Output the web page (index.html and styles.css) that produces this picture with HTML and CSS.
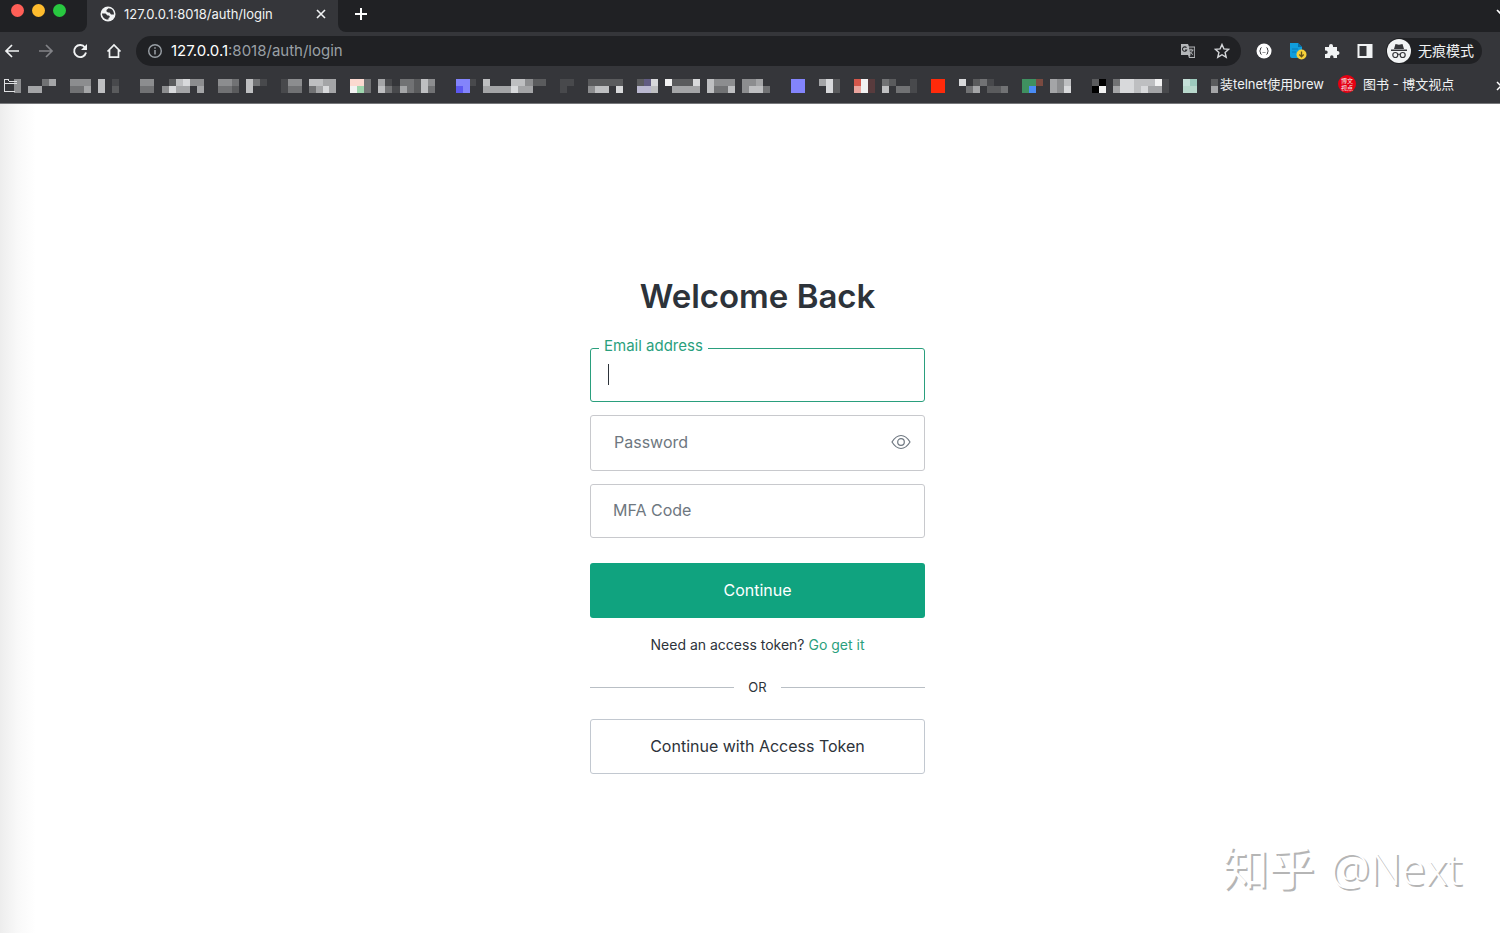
FILE: index.html
```html
<!DOCTYPE html>
<html lang="zh-CN">
<head>
<meta charset="utf-8">
<title>127.0.0.1:8018/auth/login</title>
<link rel="stylesheet" href="styles.css">
</head>
<body>
<header class="browser">
  <div class="tabstrip">
    <div class="lights"><span class="light red"></span><span class="light yellow"></span><span class="light green"></span></div>
    <div class="tab">
      <svg class="globe" width="16" height="16" viewBox="0 0 16 16"><circle cx="8" cy="8" r="7.5" fill="#f1f3f4"/><path d="M2 7.500h3.500L7.500 9.500H9l1 1.500-1.500 1v1.500C5 14 2 11 2 7.500zM8.500 2.200L6.500 4v1.500L8 6.500h1.500L11 8.500h3C14 5 12 2.300 8.500 2.200z" fill="#35363a"/></svg>
      <span class="tab-title">127.0.0.1:8018/auth/login</span>
      <button class="icon-btn" aria-label="Close tab"><svg width="10" height="10" viewBox="0 0 10 10"><path d="M1 1l8 8M9 1L1 9" stroke="#f1f3f4" stroke-width="1.6"/></svg></button>
    </div>
    <button class="icon-btn new-tab" aria-label="New tab"><svg width="14" height="14" viewBox="0 0 14 14"><path d="M7 1v12M1 7h12" stroke="#fff" stroke-width="2"/></svg></button>
    <button class="icon-btn edge" aria-label="Search tabs"><svg width="10" height="8" viewBox="0 0 10 8"><path d="M1 2l4 4 4-4" fill="none" stroke="#fff" stroke-width="1.6"/></svg></button>
  </div>
  <div class="toolbar">
    <nav class="nav">
      <button class="icon-btn" aria-label="Back"><svg width="16" height="16" viewBox="0 0 16 16"><path d="M15 8H2M8 2L2 8l6 6" fill="none" stroke="#f1f3f4" stroke-width="1.7"/></svg></button>
      <button class="icon-btn" aria-label="Forward"><svg width="16" height="16" viewBox="0 0 16 16"><path d="M1 8h13M8 2l6 6-6 6" fill="none" stroke="#828387" stroke-width="1.7"/></svg></button>
      <button class="icon-btn" aria-label="Reload"><svg width="16" height="16" viewBox="0 0 16 16"><path d="M13 4.500A6 6 0 1 0 14 9.500" fill="none" stroke="#f1f3f4" stroke-width="1.9"/><path d="M15 1v6H9z" fill="#f1f3f4"/></svg></button>
      <button class="icon-btn" aria-label="Home"><svg width="16" height="16" viewBox="0 0 16 16"><path d="M1.500 8.500L8 2l6.500 6.500M3.500 7v7.200h9V7" fill="none" stroke="#f1f3f4" stroke-width="1.700"/></svg></button>
    </nav>
    <div class="omnibox">
      <svg width="16" height="16" viewBox="0 0 16 16"><circle cx="8" cy="8" r="6.300" fill="none" stroke="#9aa0a6" stroke-width="1.400"/><path d="M8 7v4.500M8 4.300v1.500" stroke="#9aa0a6" stroke-width="1.500"/></svg>
      <span class="url"><span class="host">127.0.0.1</span>:8018/auth/login</span>
      <button class="icon-btn" aria-label="Translate"><svg width="16" height="16" viewBox="0 0 16 16"><path d="M1 1h7l1 2.500h6v11.500H9L8 12H1z" fill="#b4b6b9"/><path d="M9 4.500h5.200V14H9.500l1-2z" fill="#292a2d"/><path d="M6.500 4.800a2.200 2.200 0 1 0 .2 2.200H5" fill="none" stroke="#292a2d" stroke-width="1.100"/><path d="M8.500 7h5M11 5.700V7M12.500 7c-.5 2-1.500 3-3 4M10 8.500c.7 1.500 1.500 2.300 3 3" fill="none" stroke="#b4b6b9"/></svg></button>
      <button class="icon-btn" aria-label="Bookmark"><svg width="16" height="16" viewBox="0 0 16 16"><path d="M8 1.500l1.900 4.400 4.800.4-3.600 3.200 1.100 4.700L8 11.700l-4.200 2.500 1.100-4.700-3.600-3.200 4.800-.4z" fill="none" stroke="#d5d7da" stroke-width="1.400"/></svg></button>
    </div>
    <div class="extensions">
      <button class="icon-btn" aria-label="JSON viewer"><svg width="16" height="16" viewBox="0 0 16 16"><circle cx="8" cy="8" r="7.500" fill="#fff"/><path d="M5.500 4.500c-1.500 0-.5 3-2 3.500 1.500.5.500 3.500 2 3.500M10.500 4.500c1.500 0 .5 3 2 3.500-1.500.5-.5 3.500-2 3.500M6.700 9.500h.8M8.500 9.500h.8" fill="none" stroke="#35363a"/></svg></button>
      <button class="icon-btn" aria-label="Downloader"><svg width="18" height="18" viewBox="0 0 18 18"><path d="M1 1h8l4 4v11H3a2 2 0 0 1-2-2z" fill="#109ddc"/><path d="M9 1l4 4H9z" fill="#086da5"/><path d="M3 7h6M3 10h4" stroke="#087bb8"/><circle cx="12.500" cy="12.500" r="5" fill="#f6d13a"/><path d="M12.500 9.500v5M10.300 12.500l2.200 2.300 2.200-2.300" fill="none" stroke="#665318" stroke-width="1.300"/></svg></button>
      <button class="icon-btn" aria-label="Extensions"><svg width="16" height="16" viewBox="0 0 16 16"><path d="M1 4h4V3a2 2 0 0 1 4 0v1h4v4h.5a2 2 0 0 1 0 4H13v3H9.500v-1a1.700 1.700 0 0 0-3.400 0v1H1v-4h1a1.700 1.700 0 0 0 0-3.400H1z" fill="#f1f3f4"/></svg></button>
      <button class="icon-btn" aria-label="Side panel"><svg width="16" height="16" viewBox="0 0 16 16"><path fill-rule="evenodd" d="M.500 1h15v14H.500zM2.500 3v10h7V3z" fill="#f1f3f4"/></svg></button>
    </div>
    <button class="profile"><svg width="24" height="24" viewBox="0 0 24 24"><circle cx="12" cy="12" r="12" fill="#f1f3f4"/><path d="M8.500 5l3.500.7 3.500-.7 1.500 5H7zM4 10.500h16V12H4z" fill="#35363a"/><circle cx="8.300" cy="16" r="2.500" fill="none" stroke="#35363a" stroke-width="1.200"/><circle cx="15.700" cy="16" r="2.500" fill="none" stroke="#35363a" stroke-width="1.200"/><path d="M10.800 15.500q1.200-.8 2.400 0" fill="none" stroke="#35363a"/></svg>无痕模式</button>
  </div>
  <div class="bookmarks">
    <svg class="mosaic" width="1225" height="16" viewBox="0 0 1225 16" shape-rendering="crispEdges">
      <g fill="none" stroke-width="7">
        <path stroke="#48494c" d="M112 4.500h7M260 4.500h7M281 4.500h7M281 11.500h7M385 4.500h7M392 11.500h15M560 4.500h14M560 11.500h7M987 4.500h7M910 4.500h7M910 11.500h7M1162 4.500h7M1162 11.500h7M470 4.500h6"/>
        <path stroke="#5a5b5d" d="M112 11.500h7M169 4.500h7M232 11.500h7M414 4.500h7M414 11.500h7M533 4.500h13M588 4.500h35M637 4.500h7M672 4.500h21M833 4.500h7M833 11.500h7M889 4.500h7M973 4.500h7M987 11.500h14M1092 4.500h7M1211 4.500h7"/>
        <path stroke="#717274" d="M42 4.500h7M70 11.500h14M140 11.500h14M218 11.500h14M232 4.500h7M253 4.500h7M288 11.500h14M309 11.500h7M364 4.500h7M364 11.500h7M385 11.500h7M400 4.500h14M407 11.500h7M428 11.500h7M714 11.500h14M763 11.500h7M882 4.500h7M896 11.500h14M966 11.500h7M980 4.500h7M1001 11.500h7M1113 4.500h7"/>
        <path stroke="#8c8d8f" d="M14 4.500h7M14 11.500h7M70 4.500h21M140 4.500h14M162 11.500h7M190 4.500h14M218 4.500h14M288 4.500h14M428 4.500h7M525 4.500h8M588 11.500h7M714 4.500h21M742 4.500h14M742 11.500h7M1057 4.500h7M1057 11.500h7"/>
        <path stroke="#a4a5a7" d="M28 11.500h14M49 4.500h7M84 11.500h7M176 11.500h14M197 11.500h7M316 11.500h7M323 4.500h13M329 11.500h7M378 4.500h7M400 11.500h7M483 11.500h28M518 11.500h15M672 11.500h28M756 4.500h7M819 4.500h7M973 11.500h7M1050 4.500h7M1050 11.500h7M1113 11.500h7M1148 11.500h14M1211 11.500h7"/>
        <path stroke="#bebfc1" d="M98 4.500h7M98 11.500h7M176 4.500h7M246 4.500h7M246 11.500h7M309 4.500h14M378 11.500h7M421 4.500h7M421 11.500h7M483 4.500h7M511 4.500h14M595 11.500h14M651 11.500h7M707 4.500h7M707 11.500h7M728 11.500h7M749 11.500h14M882 11.500h7M1064 4.500h7M1134 4.500h21M1134 11.500h7"/>
        <path stroke="#d8d9db" d="M169 11.500h7M183 4.500h7M323 11.500h6M511 11.500h7M616 11.500h7M651 4.500h7M693 4.500h7M826 4.500h7M826 11.500h7M959 4.500h7M1064 11.500h7M1120 4.500h14M1120 11.500h14M1141 11.500h7"/>
        <path stroke="#f2f2f2" d="M350 11.500h7M665 4.500h7M861 4.500h7M861 11.500h7M1099 11.500h7M1155 4.500h7"/>
        <path stroke="#fbd9d0" d="M350 4.500h14"/>
        <path stroke="#9fd6ae" d="M357 11.500h7"/>
        <path stroke="#8384fb" d="M456 4.500h14M463 11.500h7M791 4.500h14M791 11.500h14"/>
        <path stroke="#5c58f0" d="M456 11.500h7"/>
        <path stroke="#615c82" d="M644 4.500h7"/>
        <path stroke="#bab8d0" d="M637 11.500h14"/>
        <path stroke="#d5564a" d="M854 4.500h7"/>
        <path stroke="#eaa49d" d="M854 11.500h7"/>
        <path stroke="#583b3d" d="M868 4.500h7M868 11.500h7"/>
        <path stroke="#ff2a0a" d="M931 4.500h14M931 11.500h14"/>
        <path stroke="#3f9060" d="M1022 4.500h14M1022 11.500h7"/>
        <path stroke="#4a8cf5" d="M1029 11.500h7"/>
        <path stroke="#7a4a40" d="M1036 4.500h7"/>
        <path stroke="#000" d="M1092 11.500h7M1099 4.500h7"/>
        <path stroke="#c5e0d8" d="M1183 4.500h7"/>
        <path stroke="#9dcabd" d="M1190 4.500h7"/>
        <path stroke="#b8d8cc" d="M1183 11.500h14"/>
      </g>
      <path d="M17 3.500H9.500L8 1.500H4.500v11.500H15M5 5.500h12" fill="none" stroke="#e0e1e3"/>
    </svg>
    <a class="bookmark" href="#">装telnet使用brew</a>
    <a class="bookmark book" href="#"><span class="badge">博文<br>视点</span>图书 - 博文视点</a>
    <button class="icon-btn edge" aria-label="More bookmarks"><svg width="10" height="10" viewBox="0 0 10 10"><path d="M1 1l4 4-4 4M5 1l4 4-4 4" fill="none" stroke="#fff" stroke-width="1.500"/></svg></button>
  </div>
</header>
<main class="page">
  <form class="login">
    <h1 class="title">Welcome Back</h1>
    <div class="field active">
      <label class="float-label" for="email">Email address</label>
      <span class="caret"></span>
      <input id="email" class="input" type="email">
    </div>
    <div class="field password">
      <input class="input" type="password" placeholder="Password" aria-label="Password">
      <button class="icon-btn reveal" type="button" aria-label="Show password"><svg width="20" height="16" viewBox="0 0 20 16"><path d="M1 8Q5 1.500 10 1.500T19 8Q15 14.500 10 14.500T1 8z" fill="none" stroke="#6e7780" stroke-width="1.200"/><circle cx="10" cy="8" r="3.300" fill="none" stroke="#6e7780" stroke-width="1.200"/></svg></button>
    </div>
    <div class="field">
      <input class="input" type="text" placeholder="MFA Code" aria-label="MFA Code">
    </div>
    <button class="btn primary" type="button">Continue</button>
    <p class="hint">Need an access token? <a class="link" href="#">Go get it</a></p>
    <div class="divider">OR</div>
    <button class="btn outline" type="button">Continue with Access Token</button>
  </form>
  <div class="watermark"><span>知乎</span><span class="handle">@Next</span></div>
</main>
</body>
</html>
```
FILE: styles.css
```css
* { box-sizing: border-box; }
body {
  margin: 0;
  min-height: 100vh;
  display: flex;
  flex-direction: column;
  overflow: hidden;
  background: #fff;
  font-family: Inter, "Noto Sans CJK SC", sans-serif;
}
button { font-family: inherit; cursor: pointer; }
.icon-btn {
  display: flex;
  flex: none;
  padding: 0;
  border: 0;
  background: none;
}
.browser { background: #35363a; color: #f1f3f4; border-bottom: 1px solid #77787b; }
.tabstrip {
  display: flex;
  align-items: center;
  height: 32px;
  background: #35363a;
}
.lights {
  display: flex;
  gap: 8px;
  width: 87px;
  height: 32px;
  padding: 4px 0 0 11px;
  border-bottom-right-radius: 8px;
  background: #202124;
}
.light { width: 13px; height: 13px; border-radius: 50%; }
.red { background: #ff5f57; }
.yellow { background: #febc2e; }
.green { background: #28c840; }
.tab {
  display: flex;
  align-items: center;
  gap: 8px;
  width: 251px;
  height: 32px;
  padding: 0 12px 4px 13px;
}
.tab-title { flex: 1; font-size: 13px; white-space: nowrap; }
.new-tab {
  flex: 1;
  align-items: center;
  height: 32px;
  padding: 0 0 4px 16px;
  border-bottom-left-radius: 8px;
  background: #202124;
}
.edge { width: 4px; margin-left: auto; overflow: hidden; }
.tabstrip .edge { align-items: center; height: 32px; padding-bottom: 8px; background: #202124; }
.edge svg { flex: none; }
.toolbar {
  display: flex;
  align-items: center;
  height: 38px;
  padding: 0 18px 0 4px;
}
.nav { display: flex; gap: 18px; width: 132px; }
.omnibox {
  display: flex;
  flex: 1;
  align-items: center;
  gap: 18px;
  height: 30px;
  padding: 0 11px;
  border-radius: 15px;
  background: #202124;
}
.url { flex: 1; margin-left: -10px; font-size: 15px; line-height: 18px; color: #9aa0a6; }
.host { color: #fff; }
.extensions { display: flex; align-items: center; gap: 17px; padding: 0 13px 0 15px; }
.profile {
  display: flex;
  align-items: center;
  gap: 7px;
  height: 26px;
  padding: 0 8px 0 1px;
  border: 0;
  border-radius: 13px;
  background: #202124;
  color: #f1f3f4;
  font-size: 14px;
  line-height: 18px;
}
.bookmarks {
  display: flex;
  align-items: center;
  height: 33px;
  padding-bottom: 2px;
  font-size: 13px;
  line-height: 18px;
}
.mosaic { flex: none; margin-right: -5px; }
.bookmark { display: flex; align-items: center; gap: 7px; margin-bottom: 3px; color: #f1f3f4; text-decoration: none; white-space: nowrap; }
.book { margin-left: 14px; }
.badge {
  width: 18px;
  height: 18px;
  padding-top: 2px;
  border-radius: 50%;
  background: #e60012;
  font-size: 6px;
  line-height: 7px;
  text-align: center;
}
.page {
  position: relative;
  flex: 1;
  padding: 172px 0 40px 15px;
  background: linear-gradient(to right, #ededed, #f9f9f9 18px, #fff 36px);
}
.login {
  display: flex;
  flex-direction: column;
  gap: 13px;
  width: 335px;
  margin: 0 auto;
  color: #2d333a;
}
.title { margin: 0 0 19px; font-size: 33px; line-height: 40px; font-weight: 600; text-align: center; white-space: nowrap; }
.field {
  position: relative;
  display: flex;
  align-items: center;
  height: 54px;
  padding: 0 13px 2px 22px;
  border: 1px solid #c8c9cd;
  border-radius: 3px;
}
.password { height: 56px; padding-left: 23px; }
.active { border-color: #2a9f7d; padding-left: 17px; }
.input {
  flex: 1;
  min-width: 0;
  padding: 0;
  border: 0;
  outline: 0;
  background: transparent;
  font: 16px Inter, sans-serif;
  color: #2d333a;
}
.input::placeholder { color: #6e7780; opacity: 1; }
.float-label {
  position: absolute;
  left: 8px;
  top: -12px;
  padding: 0 5px;
  background: #fff;
  color: #2a9f7d;
  font-size: 15px;
  line-height: 18px;
}
.caret { width: 1px; height: 21px; background: #2d333a; }
.btn { height: 55px; padding: 0 0 2px; border-radius: 3px; font-size: 16px; }
.primary { margin-top: 12px; border: 0; background: #10a37f; color: #fff; }
.hint { margin: 4px 0 9px; font-size: 14px; line-height: 20px; text-align: center; }
.link { color: #2a9f7d; text-decoration: none; }
.divider { display: flex; align-items: center; gap: 14px; margin-bottom: 9px; font-size: 13px; line-height: 20px; }
.divider::before, .divider::after { content: ""; flex: 1; height: 1px; background: #b9bfc5; }
.outline { border: 1px solid #c2c8d0; background: #fff; color: #2d333a; }
.watermark {
  position: absolute;
  right: 38px;
  bottom: 32px;
  display: flex;
  align-items: baseline;
  gap: 16px;
  color: #fff;
  font-family: "Noto Sans CJK SC", sans-serif;
  font-size: 46px;
  line-height: 66px;
  text-shadow: 2px 2px 0 #b5b5b5;
}
.handle { font-family: "Open Sans", sans-serif; font-size: 44px; font-weight: 300; }
```
